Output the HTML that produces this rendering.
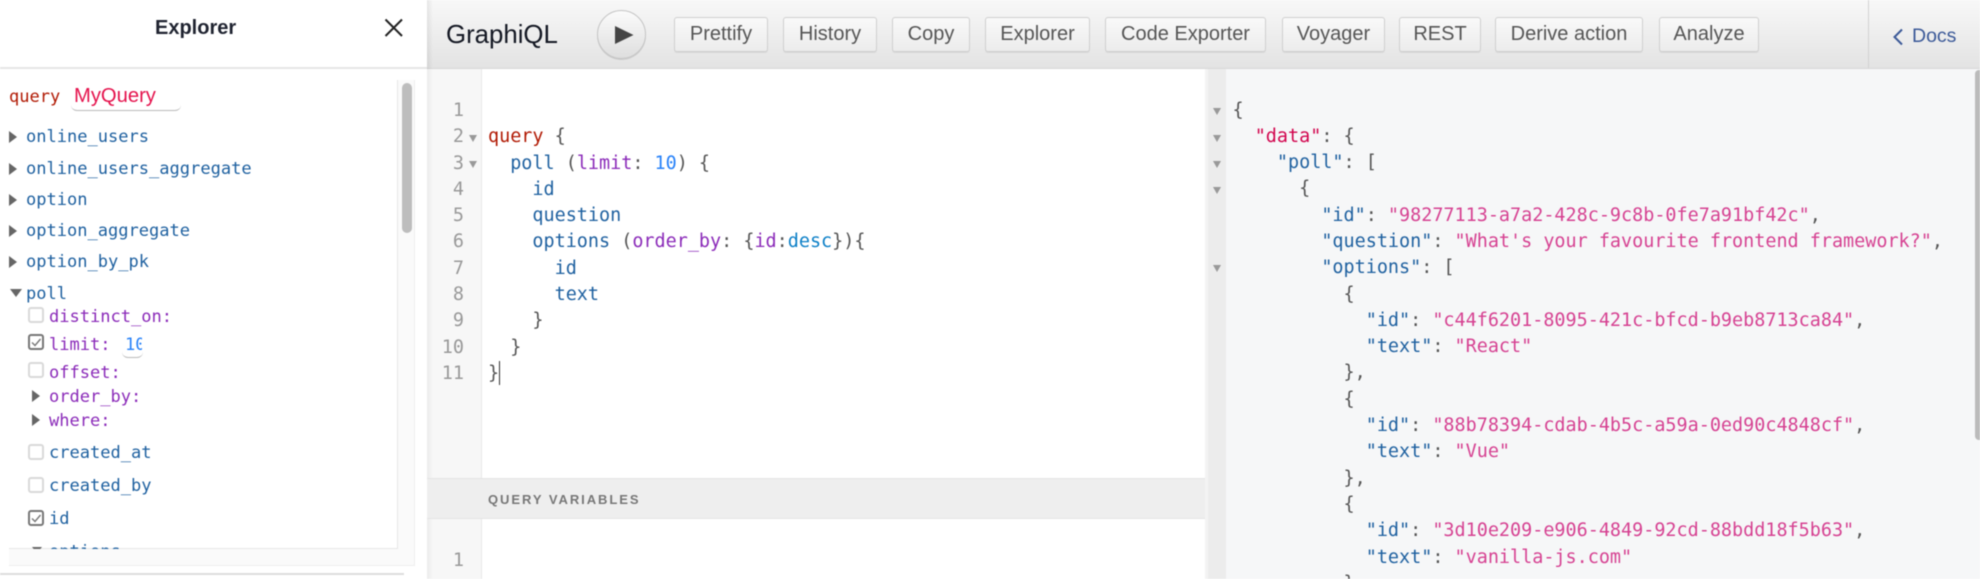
<!DOCTYPE html>
<html><head><meta charset="utf-8"><title>GraphiQL</title>
<style>
html,body{margin:0;padding:0;width:1980px;height:579px;overflow:hidden;background:#fff}
#r{position:absolute;left:0;top:0;width:1980px;height:579px;overflow:hidden;filter:blur(.5px);font-family:"Liberation Sans",sans-serif}
.a{position:absolute;white-space:pre}
.m{font-family:"DejaVu Sans Mono","Liberation Mono",monospace}
.e{font-size:17.05px;height:24px;line-height:24px}
.b{position:absolute;top:17px;height:33px;line-height:33px;border:1px solid #cfcfcf;border-radius:3px;background:linear-gradient(#f9f9f9,#ececec);box-shadow:0 1px 0 #d8d8d8;text-align:center;font-size:20px;color:#555;box-sizing:content-box}
.ta{position:absolute;width:0;height:0;border-style:solid;border-color:transparent transparent transparent #666;border-width:6px 0 6px 8.5px}
.td{position:absolute;width:0;height:0;border-style:solid;border-color:#666 transparent transparent transparent;border-width:8px 6px 0 6px}
.c{position:absolute;left:28px;width:12px;height:12px;border:2px solid #d9d9d9;border-radius:3px;background:#fff}
.c.k{border-color:#777}
.f{position:absolute;width:0;height:0;border-style:solid;border-color:#999 transparent transparent transparent;border-width:7px 4px 0 4px}
.code{font-size:18.45px;line-height:26.3px;color:#555}
.q{color:#B11A04}.p{color:#1F61A0}.g{color:#8B2BB9}.n{color:#2882F9}.s{color:#D64292}.d{color:#D2054E}.v{color:#0B7FC7}
</style></head><body><div id="r">

<!-- explorer -->
<div class="a" style="left:0;top:0;width:427px;height:579px;background:#fff"></div>
<div class="a" style="left:0;top:67px;width:427px;height:2px;background:#e6e6e6"></div>
<div class="a" style="left:155px;top:16px;font-size:20px;line-height:24px;font-weight:bold;color:#1f2330">Explorer</div>
<svg class="a" style="left:384px;top:18px" width="20" height="20" viewBox="0 0 20 20"><path d="M1.5 1.5L18 18M18 1.5L1.5 18" stroke="#222" stroke-width="2" fill="none"/></svg>

<div class="a" style="left:9px;top:80px;width:406px;height:486px;background:#fafafa;border-right:1px solid #eee;border-bottom:1px solid #eee;box-sizing:border-box"></div>
<div class="a" style="left:9px;top:80px;width:389px;height:469px;background:#fff;border-right:1px solid #e6e6e6;border-bottom:1px solid #e6e6e6;box-sizing:border-box"></div>
<div class="a" style="left:402px;top:83px;width:10px;height:150px;background:#bdbdbd;border-radius:5px"></div>
<div class="a" style="left:0;top:573px;width:404px;height:1.5px;background:#ddd"></div>

<div class="a m e q" style="left:9px;top:85px">query</div>
<div class="a" style="left:74px;top:84px;font-size:20.2px;line-height:24px;color:#E5134D">MyQuery</div>
<div class="a" style="left:71px;top:105px;width:110px;height:6px;border-bottom:1.5px solid #bbb;border-radius:0 0 6px 6px;box-sizing:border-box"></div>

<div class="ta" style="left:9px;top:131px"></div><div class="a m e p" style="left:26px;top:125px">online_users</div>
<div class="ta" style="left:9px;top:163px"></div><div class="a m e p" style="left:26px;top:157px">online_users_aggregate</div>
<div class="ta" style="left:9px;top:194px"></div><div class="a m e p" style="left:26px;top:188px">option</div>
<div class="ta" style="left:9px;top:225px"></div><div class="a m e p" style="left:26px;top:219px">option_aggregate</div>
<div class="ta" style="left:9px;top:256px"></div><div class="a m e p" style="left:26px;top:250px">option_by_pk</div>
<div class="td" style="left:10px;top:289px"></div><div class="a m e p" style="left:26px;top:282px">poll</div>

<div class="c" style="top:307px"></div><div class="a m e g" style="left:49px;top:305px">distinct_on:</div>
<div class="c k" style="top:334px"></div><svg class="a" style="left:30px;top:336px" width="12" height="12" viewBox="0 0 12 12"><path d="M2 6.5L5 9.5L10.5 3" stroke="#777" stroke-width="1.4" fill="none"/></svg>
<div class="a m e g" style="left:49px;top:333px">limit:</div>
<div class="a" style="left:125px;top:333px;width:17px;height:24px;overflow:hidden"><span class="m e n" style="line-height:24px">10</span></div>
<div class="a" style="left:122px;top:352px;width:21px;height:6px;border-bottom:1.5px solid #bbb;border-radius:0 0 6px 6px;box-sizing:border-box"></div>
<div class="c" style="top:362px"></div><div class="a m e g" style="left:49px;top:361px">offset:</div>
<div class="ta" style="left:32px;top:390px"></div><div class="a m e g" style="left:49px;top:385px">order_by:</div>
<div class="ta" style="left:32px;top:414px"></div><div class="a m e g" style="left:49px;top:409px">where:</div>
<div class="c" style="top:444px"></div><div class="a m e p" style="left:49px;top:441px">created_at</div>
<div class="c" style="top:477px"></div><div class="a m e p" style="left:49px;top:474px">created_by</div>
<div class="c k" style="top:510px"></div><svg class="a" style="left:30px;top:512px" width="12" height="12" viewBox="0 0 12 12"><path d="M2 6.5L5 9.5L10.5 3" stroke="#777" stroke-width="1.4" fill="none"/></svg>
<div class="a m e p" style="left:49px;top:507px">id</div>
<div class="a" style="left:9px;top:540px;width:388px;height:9px;overflow:hidden">
  <div class="td" style="left:23px;top:7px;border-width:6px 5.5px 0 5.5px"></div>
  <div class="a m e p" style="left:40px;top:0">options</div>
</div>

<!-- toolbar -->
<div class="a" style="left:427px;top:0;width:1553px;height:68px;background:linear-gradient(#f8f8f8,#e3e3e3);border-bottom:1.5px solid #d8d8d8;box-sizing:content-box"></div>
<div class="a" style="left:427px;top:0;width:6px;height:579px;background:linear-gradient(90deg,rgba(0,0,0,.07),rgba(0,0,0,0))"></div>
<div class="a" style="left:446px;top:20px;font-size:25.8px;line-height:30px;color:#141823">GraphiQL</div>
<div class="a" style="left:597px;top:10px;width:47px;height:47px;border:1px solid #c4c4c4;border-radius:50%;background:linear-gradient(#fbfbfb,#dedede);box-shadow:0 1px 0 #ccc"></div>
<svg class="a" style="left:615px;top:26px" width="19" height="18" viewBox="0 0 19 18"><path d="M0 0L18.5 9L0 18Z" fill="#444"/></svg>
<div class="b" style="left:674px;width:92px">Prettify</div>
<div class="b" style="left:783px;width:92px">History</div>
<div class="b" style="left:892px;width:76px">Copy</div>
<div class="b" style="left:985px;width:103px">Explorer</div>
<div class="b" style="left:1105px;width:159px">Code Exporter</div>
<div class="b" style="left:1282px;width:101px">Voyager</div>
<div class="b" style="left:1399px;width:80px">REST</div>
<div class="b" style="left:1495px;width:146px">Derive action</div>
<div class="b" style="left:1659px;width:98px">Analyze</div>
<div class="a" style="left:1868px;top:0;width:1px;height:68px;background:#d2d2d2"></div>
<svg class="a" style="left:1892px;top:28px" width="12" height="18" viewBox="0 0 12 18"><path d="M10 1.5L2.5 9L10 16.5" stroke="#3B5998" stroke-width="2" fill="none"/></svg>
<div class="a" style="left:1912px;top:24px;font-size:19.5px;line-height:24px;color:#3B5998">Docs</div>

<!-- query editor -->
<div class="a" style="left:427px;top:69px;width:55px;height:510px;background:linear-gradient(90deg,#ececec,#f7f7f7 6px);border-right:1px solid #e8e8e8;box-sizing:border-box"></div>
<div class="a" style="left:482px;top:69px;width:723px;height:510px;background:#fff"></div>
<div class="a m code" style="left:420px;top:98px;width:44px;text-align:right;color:#999">1
2
3
4
5
6
7
8
9
10
11</div>
<div class="f" style="left:469px;top:135px"></div>
<div class="f" style="left:469px;top:161px"></div>
<div class="a m code" style="left:488px;top:98px">
<span class="q">query</span> {
  <span class="p">poll</span> (<span class="g">limit</span>: <span class="n">10</span>) {
    <span class="p">id</span>
    <span class="p">question</span>
    <span class="p">options</span> (<span class="g">order_by</span>: {<span class="g">id</span>:<span class="v">desc</span>}){
      <span class="p">id</span>
      <span class="p">text</span>
    }
  }
}</div>
<div class="a" style="left:499px;top:361px;width:1px;height:24px;background:#333"></div>

<!-- variables -->
<div class="a" style="left:427px;top:478px;width:778px;height:41px;background:#eeeeee;border-top:1.5px solid #e4e4e4;border-bottom:1.5px solid #e4e4e4;box-sizing:border-box"></div>
<div class="a" style="left:488px;top:490px;font-size:13px;line-height:20px;font-weight:bold;letter-spacing:1.95px;color:#777">QUERY VARIABLES</div>
<div class="a m code" style="left:420px;top:548px;width:44px;text-align:right;color:#999">1</div>

<!-- result -->
<div class="a" style="left:1205px;top:69px;width:21px;height:510px;background:#ececec;border-left:3px solid #f3f3f3;box-sizing:border-box"></div>
<div class="a" style="left:1226px;top:69px;width:754px;height:510px;background:#f6f7f8"></div>
<div class="a" style="left:1975px;top:70px;width:5px;height:370px;background:#bbb;border-radius:4px 0 0 4px"></div>
<div class="f" style="left:1213px;top:108px"></div>
<div class="f" style="left:1213px;top:135px"></div>
<div class="f" style="left:1213px;top:161px"></div>
<div class="f" style="left:1213px;top:187px"></div>
<div class="f" style="left:1213px;top:265px"></div>
<div class="a m code" style="left:1232.5px;top:97.5px">{
  <span class="d">"data"</span>: {
    <span class="p">"poll"</span>: [
      {
        <span class="p">"id"</span>: <span class="s">"98277113-a7a2-428c-9c8b-0fe7a91bf42c"</span>,
        <span class="p">"question"</span>: <span class="s">"What's your favourite frontend framework?"</span>,
        <span class="p">"options"</span>: [
          {
            <span class="p">"id"</span>: <span class="s">"c44f6201-8095-421c-bfcd-b9eb8713ca84"</span>,
            <span class="p">"text"</span>: <span class="s">"React"</span>
          },
          {
            <span class="p">"id"</span>: <span class="s">"88b78394-cdab-4b5c-a59a-0ed90c4848cf"</span>,
            <span class="p">"text"</span>: <span class="s">"Vue"</span>
          },
          {
            <span class="p">"id"</span>: <span class="s">"3d10e209-e906-4849-92cd-88bdd18f5b63"</span>,
            <span class="p">"text"</span>: <span class="s">"vanilla-js.com"</span>
          }</div>
</div></body></html>
